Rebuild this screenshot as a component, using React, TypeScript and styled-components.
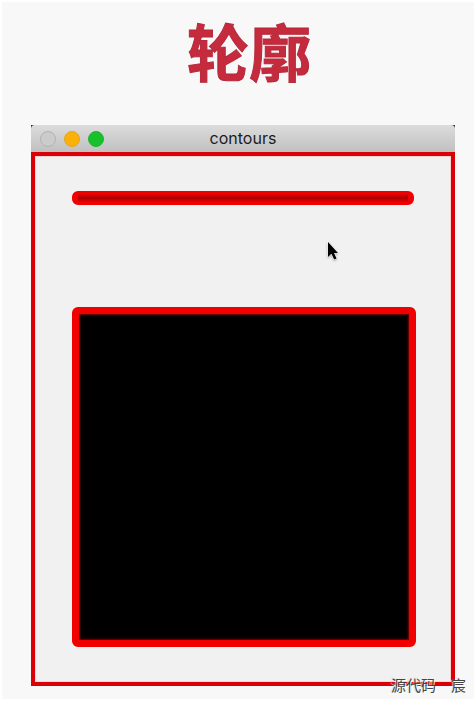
import React from "react";
import styled, { createGlobalStyle } from "styled-components";

const GlobalStyle = createGlobalStyle`
  * { box-sizing: border-box; }
  body { margin: 0; background: #ffffff; }
`;

const Page = styled.main`
  position: relative;
  display: flex;
  flex-direction: column;
  min-height: calc(100vh - 4px);
  margin: 2px 0 2px 2px;
  padding: 0 19px 13px 29px;
  background: #f8f8f8;
`;

const Heading = styled.h1`
  margin: 0;
  padding: 6px 0 33px 12px;
  text-align: center;
  font: 700 62px/84px "Noto Sans CJK SC", sans-serif;
  color: #c52b3d;
  -webkit-text-stroke: 1px #b52a3c;
`;

const Window = styled.section`
  display: flex;
  flex: 1;
  flex-direction: column;
  background: #333333;
`;

const TitleBar = styled.header`
  display: grid;
  grid-template-columns: 1fr auto 1fr;
  align-items: center;
  height: 27px;
  padding: 0 9px;
  border-radius: 4px 4px 0 0;
  background: linear-gradient(#dcdcdc, #c0c0c0);
`;

const Controls = styled.div`
  display: flex;
  gap: 8px;
`;

const ControlButton = styled.button<{ $fill: string; $edge: string }>`
  width: 16px;
  height: 16px;
  padding: 0;
  border: 1px solid ${({ $edge }) => $edge};
  border-radius: 50%;
  background: ${({ $fill }) => $fill};
`;

const WindowTitle = styled.h2`
  margin: 0;
  font: 400 16px/27px Inter, sans-serif;
  color: #1c1c1c;
`;

const Canvas = styled.div`
  display: flex;
  flex: 1;
  flex-direction: column;
  gap: 102px;
  padding: 35px;
  border: 4px solid #d90008;
  background: #f1f1f1;
  box-shadow: inset 0 0 0 1px #f9d4d4;
`;

const LineContour = styled.div`
  height: 14px;
  margin: 0 2px;
  border: 1px solid #f00000;
  border-width: 1px 6px;
  border-radius: 6px;
  background: linear-gradient(#f00000 15%, #b00000 46%, #b00000 54%, #f00000 85%);
`;

const SquareContour = styled.div`
  flex: 1;
  min-height: 200px;
  margin-left: 2px;
  border: 7px solid #f00000;
  border-radius: 6px;
  background: #000000;
  box-shadow: inset 0 0 2px 1px #800000;
`;

const Pointer = styled.svg`
  position: absolute;
  top: 238px;
  left: 324px;
  width: 16px;
  height: 24px;
  filter: drop-shadow(0 1px 1px rgba(0, 0, 0, 0.3));
`;

const Watermark = styled.small`
  position: absolute;
  right: 8px;
  bottom: 3px;
  font: 400 15px/22px "Noto Sans CJK SC", sans-serif;
  white-space: pre;
  color: #444444;
  text-shadow: 1px 1px 0 #ffffff, -1px 0 1px #dddddd;
`;

const controls = [
  { label: "Close", fill: "#cbcbcb", edge: "#b2b2b2" },
  { label: "Minimize", fill: "#fbb208", edge: "#e8a51a" },
  { label: "Zoom", fill: "#17c12b", edge: "#20b332" },
];

export default function App() {
  return (
    <>
      <GlobalStyle />
      <Page>
        <Heading>轮廓</Heading>
        <Window>
          <TitleBar>
            <Controls>
              {controls.map(({ label, fill, edge }) => (
                <ControlButton key={label} type="button" aria-label={label} $fill={fill} $edge={edge} />
              ))}
            </Controls>
            <WindowTitle>contours</WindowTitle>
          </TitleBar>
          <Canvas>
            <LineContour />
            <SquareContour />
          </Canvas>
        </Window>
        <Pointer viewBox="0 0 16 24" aria-hidden="true">
          <path
            d="M2 2 V17 L5.4 13.8 L8.2 19.6 L10.6 18.4 L8 12.9 H12 Z"
            fill="#000000"
            stroke="#ffffff"
            strokeWidth="1"
            paintOrder="stroke"
          />
        </Pointer>
        <Watermark>源代码　宸</Watermark>
      </Page>
    </>
  );
}
